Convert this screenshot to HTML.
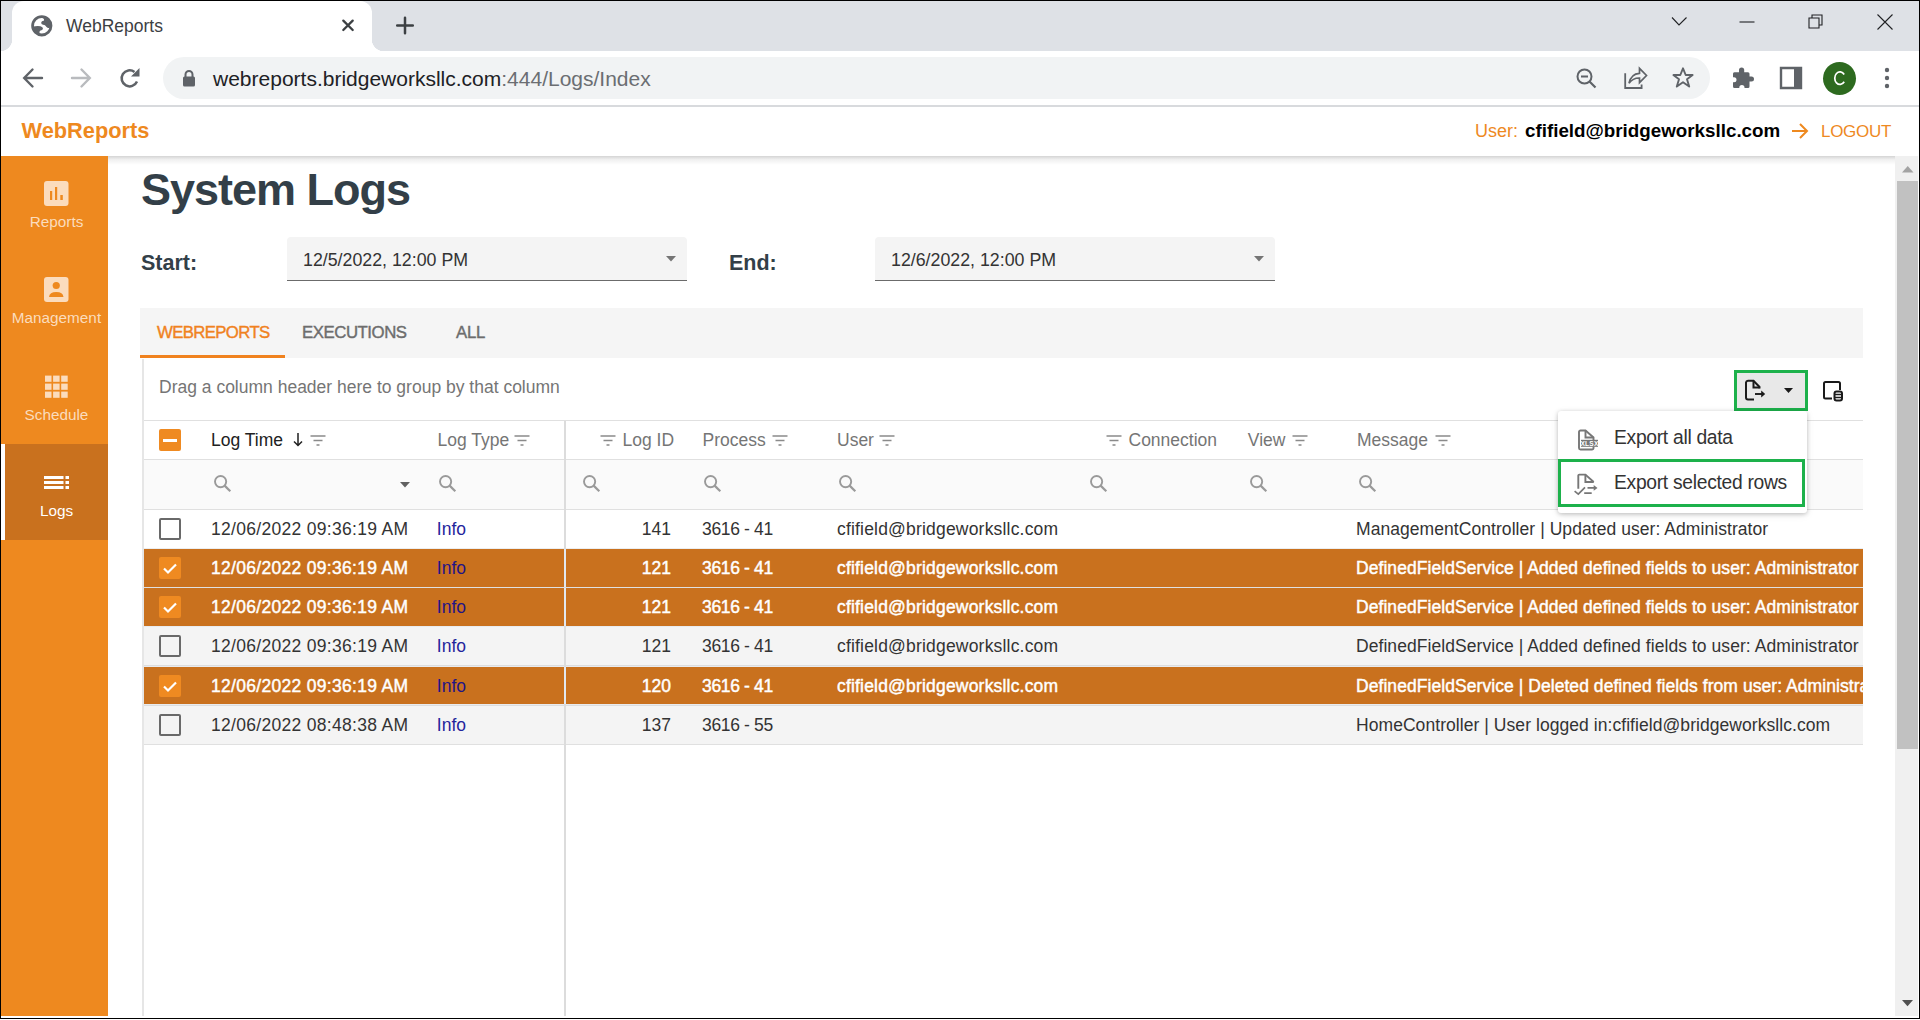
<!DOCTYPE html>
<html><head><meta charset="utf-8"><title>WebReports</title>
<style>
*{box-sizing:border-box;margin:0;padding:0}
html,body{width:1920px;height:1020px;overflow:hidden;background:#fff;font-family:"Liberation Sans",sans-serif;position:relative}
.abs{position:absolute}
svg{position:absolute;overflow:visible}
.t{position:absolute;white-space:nowrap;line-height:1}
#frame{position:absolute;left:0;top:0;width:1920px;height:1019px;border:1px solid #000;pointer-events:none;z-index:100}
#tabstrip{position:absolute;left:1px;top:1px;width:1918px;height:50px;background:#dee1e6}
#tab{position:absolute;left:12px;top:1px;width:360px;height:50px;background:#fff;border-radius:12px 12px 0 0}
#tab:before{content:"";position:absolute;left:-12px;bottom:0;width:12px;height:12px;background:radial-gradient(circle at 0 0,#dee1e6 12px,#fff 12.5px)}
#tab:after{content:"";position:absolute;right:-12px;bottom:0;width:12px;height:12px;background:radial-gradient(circle at 100% 0,#dee1e6 12px,#fff 12.5px)}
#omni{position:absolute;left:163px;top:57px;width:1547px;height:42px;background:#f1f3f4;border-radius:21px}
#sep{position:absolute;left:1px;top:105px;width:1918px;height:2px;background:#d8dadd}
#apphdr{position:absolute;left:1px;top:107px;width:1918px;height:49px;background:#fff}
#hdrshadow{position:absolute;left:108px;top:156px;width:1787px;height:9px;background:linear-gradient(rgba(0,0,0,.17),rgba(0,0,0,.06) 40%,rgba(0,0,0,0));z-index:6}
#sidebar{position:absolute;left:1px;top:156px;width:107px;height:860px;background:#ee891f}
#vscroll{position:absolute;left:1895px;top:156px;width:23px;height:860px;background:#f0f0f0}
</style></head><body>
<div id="frame"></div>
<div id="tabstrip"></div>
<div id="tab"></div>
<div id="omni"></div>
<div id="sep"></div>
<svg style="left:31px;top:15px" width="22" height="22" viewBox="0 0 22 22"><circle cx="10.8" cy="10.8" r="9.2" fill="none" stroke="#5f6368" stroke-width="2.8"/><path d="M10.5 2.2Q15.5 1.8 18.5 5.5Q20.5 8.5 19.8 11.5Q18.5 13.8 16.5 12.8Q15 12 14.5 10.8Q13.8 9.8 12 9.8Q10 9.5 10.2 7.5Q10.5 5.8 12.8 5.8Q13.5 4.5 12.5 3.5Z" fill="#5f6368"/><path d="M1.8 11.8Q5.5 10.5 9.5 11.2Q12 12 12 13.8Q11.5 15.5 9.5 15.5Q8.3 15.8 8.5 17.5L9 20.3Q3 19 1.8 11.8Z" fill="#5f6368"/></svg><div class="t" style="left:66px;top:17.69px;font-size:17.5px;color:#3c4043;font-weight:normal;">WebReports</div>
<svg style="left:341px;top:18px" width="14" height="14" viewBox="0 0 14 14"><path d="M2.3 2.6L11.7 12M11.7 2.6L2.3 12" stroke="#3c4043" stroke-width="2.3" stroke-linecap="round"/></svg>
<svg style="left:395px;top:16px" width="20" height="20" viewBox="0 0 20 20"><path d="M10 1.8V17.2M2.2 9.5H17.8" stroke="#3c4043" stroke-width="2.5" stroke-linecap="round"/></svg>
<svg style="left:1670px;top:15px" width="18" height="12" viewBox="0 0 18 12"><path d="M2 2.5L9 10L16.5 2.5" fill="none" stroke="#202124" stroke-width="1.1"/></svg>
<svg style="left:1738px;top:19.5px" width="18" height="4" viewBox="0 0 18 4"><path d="M1.5 2H16.5" stroke="#202124" stroke-width="1.1"/></svg>
<svg style="left:1807px;top:12px" width="18" height="18" viewBox="0 0 18 18"><path d="M2 6H12V16H2Z" fill="none" stroke="#202124" stroke-width="1.1"/><path d="M5 6V3H15V13H12" fill="none" stroke="#202124" stroke-width="1.1"/></svg>
<svg style="left:1875px;top:12px" width="20" height="20" viewBox="0 0 20 20"><path d="M2.5 2.5L17.5 17.5M17.5 2.5L2.5 17.5" stroke="#202124" stroke-width="1.1"/></svg>
<svg style="left:22px;top:67px" width="22" height="22" viewBox="0 0 22 22"><path d="M20 11H3M10.5 2.5L2.2 11L10.5 19.5" fill="none" stroke="#5f6368" stroke-width="2.4" stroke-linecap="round"/></svg>
<svg style="left:70px;top:67px" width="22" height="22" viewBox="0 0 22 22"><path d="M2 11H19M11.5 2.5L19.8 11L11.5 19.5" fill="none" stroke="#b9bbbe" stroke-width="2.4" stroke-linecap="round"/></svg>
<svg style="left:118px;top:66px" width="24" height="24" viewBox="0 0 24 24"><path d="M19 15.5A8 8 0 1 1 16.5 6" fill="none" stroke="#5f6368" stroke-width="2.5"/><path d="M21.5 2V10.5H13Z" fill="#5f6368"/></svg>
<svg style="left:181px;top:68px" width="16" height="20" viewBox="0 0 16 20"><path d="M4.5 9V6.5A3.5 3.5 0 0 1 11.5 6.5V9" fill="none" stroke="#5f6368" stroke-width="2"/><rect x="2" y="8.5" width="12" height="10" rx="1.5" fill="#5f6368"/></svg>
<div class="t" style="left:213px;top:68.22px;font-size:21px;color:#202124;font-weight:normal;">webreports.bridgeworksllc.com<span style="color:#6b6e72">:444/Logs/Index</span></div>
<svg style="left:1575px;top:66.5px" width="24" height="24" viewBox="0 0 24 24"><circle cx="9.5" cy="9.5" r="7" fill="none" stroke="#5f6368" stroke-width="2"/><path d="M6 9.5H13M14.5 14.5L20.5 20.5" stroke="#5f6368" stroke-width="2.2"/></svg>
<svg style="left:1623px;top:66px" width="24" height="24" viewBox="0 0 24 24"><path d="M2.2 7.3V22H18.6V18.6" fill="none" stroke="#5f6368" stroke-width="1.8"/><path d="M6 17.3Q8 7.8 16.5 7.3V2.3L23.5 9.5L16.5 16.7V12Q10 11.8 6 17.3Z" fill="none" stroke="#5f6368" stroke-width="1.7" stroke-linejoin="miter"/></svg><svg style="left:1671px;top:66px" width="24" height="24" viewBox="0 0 24 24"><path d="M12 2.3L14.7 9H21.6L16 13.3L18.2 20.6L12 16.2L5.8 20.6L8 13.3L2.4 9H9.3Z" fill="none" stroke="#5f6368" stroke-width="1.9" stroke-linejoin="round"/></svg>
<svg style="left:1731px;top:66px" width="24" height="24" viewBox="0 0 24 24"><path d="M2 8A1.5 1.5 0 0 1 3.5 6.3H8V4A2.6 2.6 0 0 1 13.2 4V6.3H17A1.5 1.5 0 0 1 18.5 7.8V10.5H20.5A2.5 2.5 0 0 1 20.5 15.5H18.5V20.5A1.5 1.5 0 0 1 17 22H13.5V21.5A2.6 2.6 0 0 0 8.3 21.5V22H3.5A1.5 1.5 0 0 1 2 20.5V16.3H3A2.5 2.5 0 0 0 3 11.3H2Z" fill="#5f6368"/></svg><svg style="left:1779px;top:66px" width="24" height="24" viewBox="0 0 24 24"><path d="M2 2H22V22H2Z" fill="none" stroke="#5f6368" stroke-width="2.4"/><rect x="15" y="2" width="7" height="20" fill="#5f6368"/></svg>
<div class="abs" style="left:1823px;top:62px;width:33px;height:33px;border-radius:50%;background:#2d6a1f"></div>
<svg style="left:1823px;top:62px" width="33" height="33" viewBox="0 0 33 33"><path d="M21.2 12.5A5.2 6.3 0 1 0 21.2 19.8" fill="none" stroke="#fff" stroke-width="1.7"/></svg><svg style="left:1877px;top:66px" width="20" height="24" viewBox="0 0 20 24"><circle cx="10" cy="4" r="2.2" fill="#5f6368"/><circle cx="10" cy="12" r="2.2" fill="#5f6368"/><circle cx="10" cy="20" r="2.2" fill="#5f6368"/></svg>
<div id="apphdr"></div>
<div class="t" style="left:21.5px;top:120.05px;font-size:21.8px;color:#ee891f;font-weight:bold;">WebReports</div>
<div class="t" style="left:1475px;top:122.26px;font-size:18px;color:#ee891f;font-weight:normal;">User:</div>
<div class="t" style="left:1525px;top:121.59px;font-size:18.8px;color:#000;font-weight:bold;">cfifield@bridgeworksllc.com</div>
<svg style="left:1790px;top:122px" width="20" height="18" viewBox="0 0 20 18"><path d="M2 9H17M10 2L17 9L10 16" fill="none" stroke="#ee891f" stroke-width="2"/></svg>
<div class="t" style="left:1821px;top:123.21px;font-size:17px;color:#ee891f;font-weight:normal;letter-spacing:-0.3px">LOGOUT</div>
<div id="sidebar"></div>
<div class="abs" style="left:1px;top:444px;width:107px;height:96px;background:#c9711e;border-left:4px solid #fff"></div>
<svg style="left:44px;top:181px" width="25" height="25" viewBox="0 0 25 25"><rect x="0" y="0" width="24.5" height="25" rx="3" fill="#fbdcbd"/><rect x="6" y="10" width="2.2" height="9" fill="#ee891f"/><rect x="11" y="6" width="2.2" height="13" fill="#ee891f"/><rect x="16.3" y="14" width="2.5" height="5" fill="#ee891f"/></svg>
<div class="t" style="left:-243.5px;width:600px;text-align:center;top:214.05px;font-size:15.3px;color:#fbdcbd;font-weight:normal;">Reports</div>
<svg style="left:44px;top:277px" width="25" height="25" viewBox="0 0 25 25"><rect x="0" y="0" width="24.5" height="25" rx="3" fill="#fbdcbd"/><circle cx="12.25" cy="8.5" r="3.6" fill="#ee891f"/><path d="M5 20Q5.5 15 12.25 15Q19 15 19.5 20Z" fill="#ee891f"/></svg>
<div class="t" style="left:-243.5px;width:600px;text-align:center;top:310.05px;font-size:15.3px;color:#fbdcbd;font-weight:normal;">Management</div>
<svg style="left:44px;top:375px" width="24" height="23" viewBox="0 0 24 23"><rect x="1.0" y="0.6" width="6.5" height="6.2" fill="#fbdcbd"/><rect x="9.1" y="0.6" width="6.5" height="6.2" fill="#fbdcbd"/><rect x="17.2" y="0.6" width="6.5" height="6.2" fill="#fbdcbd"/><rect x="1.0" y="8.6" width="6.5" height="6.2" fill="#fbdcbd"/><rect x="9.1" y="8.6" width="6.5" height="6.2" fill="#fbdcbd"/><rect x="17.2" y="8.6" width="6.5" height="6.2" fill="#fbdcbd"/><rect x="1.0" y="16.6" width="6.5" height="6.2" fill="#fbdcbd"/><rect x="9.1" y="16.6" width="6.5" height="6.2" fill="#fbdcbd"/><rect x="17.2" y="16.6" width="6.5" height="6.2" fill="#fbdcbd"/></svg>
<div class="t" style="left:-243.5px;width:600px;text-align:center;top:406.75px;font-size:15.3px;color:#fbdcbd;font-weight:normal;">Schedule</div>
<svg style="left:44px;top:475px" width="26" height="16" viewBox="0 0 26 16"><rect x="0" y="1" width="19.5" height="3" fill="#fff"/><rect x="0" y="6" width="19.5" height="3" fill="#fff"/><rect x="0" y="11" width="19.5" height="3" fill="#fff"/><rect x="21.5" y="1" width="3.5" height="3" fill="#fff"/><rect x="21.5" y="6" width="3.5" height="3" fill="#fff"/><rect x="21.5" y="11" width="3.5" height="3" fill="#fff"/></svg>
<div class="t" style="left:-243.5px;width:600px;text-align:center;top:503.05px;font-size:15.3px;color:#fff;font-weight:normal;">Logs</div>
<div id="hdrshadow"></div>
<div class="t" style="left:141px;top:167.41px;font-size:45px;color:#333f48;font-weight:bold;letter-spacing:-1px">System Logs</div>
<div class="t" style="left:141px;top:253.10px;font-size:21.5px;color:#333f48;font-weight:bold;">Start:</div>
<div class="t" style="left:729px;top:253.10px;font-size:21.5px;color:#333f48;font-weight:bold;">End:</div>
<div class="abs" style="left:287px;top:237px;width:400px;height:44px;background:#f4f4f4;border-radius:4px 4px 0 0;border-bottom:1px solid #6b6b6b"></div>
<div class="t" style="left:303px;top:251.93px;font-size:17.8px;color:#333;font-weight:normal;">12/5/2022, 12:00 PM</div>
<svg style="left:666px;top:256px" width="11" height="6" viewBox="0 0 11 6"><path d="M0 0H10L5 5.5Z" fill="#757575"/></svg>
<div class="abs" style="left:875px;top:237px;width:400px;height:44px;background:#f4f4f4;border-radius:4px 4px 0 0;border-bottom:1px solid #6b6b6b"></div>
<div class="t" style="left:891px;top:251.93px;font-size:17.8px;color:#333;font-weight:normal;">12/6/2022, 12:00 PM</div>
<svg style="left:1254px;top:256px" width="11" height="6" viewBox="0 0 11 6"><path d="M0 0H10L5 5.5Z" fill="#757575"/></svg>
<div class="abs" style="left:140px;top:308px;width:1723px;height:50px;background:#f5f5f5"></div>
<div class="abs" style="left:140px;top:355px;width:145px;height:3px;background:#f0821e"></div>
<div class="t" style="left:157px;top:325.28px;font-size:16.8px;color:#f0821e;font-weight:normal;letter-spacing:-0.65px;-webkit-text-stroke:0.4px #f0821e">WEBREPORTS</div>
<div class="t" style="left:302px;top:325.28px;font-size:16.8px;color:#6d6d6d;font-weight:normal;letter-spacing:-0.45px;-webkit-text-stroke:0.4px #6d6d6d">EXECUTIONS</div>
<div class="t" style="left:456px;top:325.28px;font-size:16.8px;color:#6d6d6d;font-weight:normal;letter-spacing:-0.3px;-webkit-text-stroke:0.4px #6d6d6d">ALL</div>
<div class="abs" style="left:142px;top:359px;width:1721px;height:657px;background:#fff;border-left:2px solid #e6e6e6"></div>
<div class="t" style="left:159px;top:378.69px;font-size:17.5px;color:#757575;font-weight:normal;">Drag a column header here to group by that column</div>
<div class="abs" style="left:1734px;top:370px;width:74px;height:41px;background:#e8e8e8;border:3px solid #1db14b"></div>
<svg style="left:1745px;top:380px" width="22" height="21" viewBox="0 0 22 21"><path d="M9 19.5H3A2 2 0 0 1 1 17.5V2.5A2 2 0 0 1 3 0.8H8.5L14.5 7V8.5" fill="none" stroke="#1a1a1a" stroke-width="2"/><path d="M8.5 0.8V7.5H14.5" fill="none" stroke="#1a1a1a" stroke-width="2"/><path d="M10 14H17" stroke="#1a1a1a" stroke-width="1.9"/><path d="M16.2 10.6L20.2 14L16.2 17.4Z" fill="#1a1a1a"/></svg>
<svg style="left:1784px;top:388px" width="10" height="6" viewBox="0 0 10 6"><path d="M0 0H9L4.5 5Z" fill="#1a1a1a"/></svg>
<svg style="left:1823px;top:381px" width="21" height="21" viewBox="0 0 21 21"><path d="M9 17.5H2.5A1.5 1.5 0 0 1 1 16V2.5A1.5 1.5 0 0 1 2.5 1H15.5A1.5 1.5 0 0 1 17 2.5V9" fill="none" stroke="#1a1a1a" stroke-width="2"/><rect x="11.5" y="10.5" width="7.5" height="9" rx="2" fill="none" stroke="#1a1a1a" stroke-width="2"/><path d="M12 13.5H18.5M12 16.5H18.5" stroke="#1a1a1a" stroke-width="1.6"/></svg>
<div class="abs" style="left:144px;top:420px;width:1719px;height:1px;background:#e0e0e0"></div>
<div class="abs" style="left:144px;top:459px;width:1719px;height:1px;background:#e0e0e0"></div>
<div class="abs" style="left:144px;top:460px;width:1719px;height:49px;background:#fafafa"></div>
<div class="abs" style="left:144px;top:509px;width:1719px;height:1px;background:#e0e0e0"></div>
<div class="abs" style="left:159px;top:429px;width:22px;height:22px;background:#ef8a21;border-radius:2px"></div>
<div class="abs" style="left:163px;top:438.5px;width:14px;height:3px;background:#fff"></div>
<div class="t" style="left:211px;top:431.99px;font-size:17.5px;color:#212121;font-weight:normal;">Log Time</div>
<svg style="left:292px;top:432px" width="12" height="15" viewBox="0 0 12 15"><path d="M6 1V13.5M2 9.5L6 13.5L10 9.5" fill="none" stroke="#212121" stroke-width="1.5"/></svg>
<svg style="left:310px;top:434.5px" width="16" height="11" viewBox="0 0 16 11"><path d="M0.5 1H15.5M3.5 5.5H12.5M6.5 10H9.5" stroke="#8a8a8a" stroke-width="1.6"/></svg>
<div class="t" style="left:437.5px;top:431.99px;font-size:17.5px;color:#757575;font-weight:normal;">Log Type</div>
<svg style="left:514px;top:434.5px" width="16" height="11" viewBox="0 0 16 11"><path d="M0.5 1H15.5M3.5 5.5H12.5M6.5 10H9.5" stroke="#8a8a8a" stroke-width="1.6"/></svg>
<svg style="left:600px;top:434.5px" width="16" height="11" viewBox="0 0 16 11"><path d="M0.5 1H15.5M3.5 5.5H12.5M6.5 10H9.5" stroke="#8a8a8a" stroke-width="1.6"/></svg>
<div class="t" style="left:622.5px;top:431.99px;font-size:17.5px;color:#757575;font-weight:normal;">Log ID</div>
<div class="t" style="left:702.5px;top:431.99px;font-size:17.5px;color:#757575;font-weight:normal;">Process</div>
<svg style="left:772px;top:434.5px" width="16" height="11" viewBox="0 0 16 11"><path d="M0.5 1H15.5M3.5 5.5H12.5M6.5 10H9.5" stroke="#8a8a8a" stroke-width="1.6"/></svg>
<div class="t" style="left:837px;top:431.99px;font-size:17.5px;color:#757575;font-weight:normal;">User</div>
<svg style="left:879px;top:434.5px" width="16" height="11" viewBox="0 0 16 11"><path d="M0.5 1H15.5M3.5 5.5H12.5M6.5 10H9.5" stroke="#8a8a8a" stroke-width="1.6"/></svg>
<svg style="left:1106px;top:434.5px" width="16" height="11" viewBox="0 0 16 11"><path d="M0.5 1H15.5M3.5 5.5H12.5M6.5 10H9.5" stroke="#8a8a8a" stroke-width="1.6"/></svg>
<div class="t" style="left:1128.5px;top:431.99px;font-size:17.5px;color:#757575;font-weight:normal;">Connection</div>
<div class="t" style="left:1247.8px;top:431.99px;font-size:17.5px;color:#757575;font-weight:normal;">View</div>
<svg style="left:1292px;top:434.5px" width="16" height="11" viewBox="0 0 16 11"><path d="M0.5 1H15.5M3.5 5.5H12.5M6.5 10H9.5" stroke="#8a8a8a" stroke-width="1.6"/></svg>
<div class="t" style="left:1357px;top:431.99px;font-size:17.5px;color:#757575;font-weight:normal;">Message</div>
<svg style="left:1434.6px;top:434.5px" width="16" height="11" viewBox="0 0 16 11"><path d="M0.5 1H15.5M3.5 5.5H12.5M6.5 10H9.5" stroke="#8a8a8a" stroke-width="1.6"/></svg>
<svg style="left:213.5px;top:475px" width="18" height="18" viewBox="0 0 18 18"><circle cx="6.6" cy="6.6" r="5.6" fill="none" stroke="#9a9a9a" stroke-width="1.9"/><path d="M10.6 10.6L16.3 16.3" stroke="#9a9a9a" stroke-width="2.2"/></svg>
<svg style="left:439px;top:475px" width="18" height="18" viewBox="0 0 18 18"><circle cx="6.6" cy="6.6" r="5.6" fill="none" stroke="#9a9a9a" stroke-width="1.9"/><path d="M10.6 10.6L16.3 16.3" stroke="#9a9a9a" stroke-width="2.2"/></svg>
<svg style="left:583px;top:475px" width="18" height="18" viewBox="0 0 18 18"><circle cx="6.6" cy="6.6" r="5.6" fill="none" stroke="#9a9a9a" stroke-width="1.9"/><path d="M10.6 10.6L16.3 16.3" stroke="#9a9a9a" stroke-width="2.2"/></svg>
<svg style="left:704px;top:475px" width="18" height="18" viewBox="0 0 18 18"><circle cx="6.6" cy="6.6" r="5.6" fill="none" stroke="#9a9a9a" stroke-width="1.9"/><path d="M10.6 10.6L16.3 16.3" stroke="#9a9a9a" stroke-width="2.2"/></svg>
<svg style="left:839px;top:475px" width="18" height="18" viewBox="0 0 18 18"><circle cx="6.6" cy="6.6" r="5.6" fill="none" stroke="#9a9a9a" stroke-width="1.9"/><path d="M10.6 10.6L16.3 16.3" stroke="#9a9a9a" stroke-width="2.2"/></svg>
<svg style="left:1090px;top:475px" width="18" height="18" viewBox="0 0 18 18"><circle cx="6.6" cy="6.6" r="5.6" fill="none" stroke="#9a9a9a" stroke-width="1.9"/><path d="M10.6 10.6L16.3 16.3" stroke="#9a9a9a" stroke-width="2.2"/></svg>
<svg style="left:1250px;top:475px" width="18" height="18" viewBox="0 0 18 18"><circle cx="6.6" cy="6.6" r="5.6" fill="none" stroke="#9a9a9a" stroke-width="1.9"/><path d="M10.6 10.6L16.3 16.3" stroke="#9a9a9a" stroke-width="2.2"/></svg>
<svg style="left:1359.4px;top:475px" width="18" height="18" viewBox="0 0 18 18"><circle cx="6.6" cy="6.6" r="5.6" fill="none" stroke="#9a9a9a" stroke-width="1.9"/><path d="M10.6 10.6L16.3 16.3" stroke="#9a9a9a" stroke-width="2.2"/></svg>
<svg style="left:400px;top:481.5px" width="10" height="6" viewBox="0 0 10 6"><path d="M0 0H10L5 5.5Z" fill="#616161"/></svg>
<div class="abs" style="left:144px;top:548px;width:1719px;height:1px;background:#eceef0"></div>
<div class="abs" style="left:144px;top:587px;width:1719px;height:1px;background:#e0e0e0"></div>
<div class="abs" style="left:144px;top:626px;width:1719px;height:1px;background:#e8ebef"></div>
<div class="abs" style="left:144px;top:665px;width:1719px;height:1px;background:#dddddd"></div>
<div class="abs" style="left:144px;top:666px;width:1719px;height:1px;background:#e8ebef"></div>
<div class="abs" style="left:144px;top:704px;width:1719px;height:1px;background:#e8ebef"></div>
<div class="abs" style="left:144px;top:705px;width:1719px;height:1px;background:#dddddd"></div>
<div class="abs" style="left:144px;top:744px;width:1719px;height:1px;background:#e0e0e0"></div>
<div class="abs" style="left:144px;top:510px;width:1719px;height:38px;background:#fff"></div>
<div class="abs" style="left:159px;top:518px;width:22px;height:22px;border:2px solid #696969;border-radius:2px"></div>
<div class="t" style="left:211px;top:521.39px;font-size:17.5px;color:#333;font-weight:normal;letter-spacing:0.3px">12/06/2022 09:36:19 AM</div>
<div class="t" style="left:436.8px;top:521.39px;font-size:17.5px;color:#24249c;font-weight:normal;">Info</div>
<div class="t" style="right:1249px;top:521.39px;font-size:17.5px;color:#333;font-weight:normal;">141</div>
<div class="t" style="left:702px;top:521.39px;font-size:17.5px;color:#333;font-weight:normal;letter-spacing:-0.35px">3616 - 41</div>
<div class="t" style="left:837px;top:521.39px;font-size:17.5px;color:#333;font-weight:normal;letter-spacing:0.19px">cfifield@bridgeworksllc.com</div>
<div class="abs" style="left:1356px;top:510px;width:507px;height:38px;overflow:hidden"><div class="t" style="left:0px;top:11.39px;font-size:17.5px;color:#333;font-weight:normal;letter-spacing:0.06px">ManagementController | Updated user: Administrator</div>
</div>
<div class="abs" style="left:144px;top:549px;width:1719px;height:38px;background:#c9711e"></div>
<div class="abs" style="left:159px;top:557px;width:22px;height:22px;background:#ef8a21;border-radius:2px"></div>
<svg style="left:159px;top:557px" width="22" height="22" viewBox="0 0 22 22"><path d="M5 11.5L9 15.5L17 7.5" fill="none" stroke="#fff" stroke-width="2.2"/></svg>
<div class="t" style="left:211px;top:560.39px;font-size:17.5px;color:#fff;font-weight:normal;letter-spacing:0.3px;-webkit-text-stroke:0.45px #fff">12/06/2022 09:36:19 AM</div>
<div class="t" style="left:436.8px;top:560.39px;font-size:17.5px;color:#1f1488;font-weight:normal;">Info</div>
<div class="t" style="right:1249px;top:560.39px;font-size:17.5px;color:#fff;font-weight:normal;;-webkit-text-stroke:0.45px #fff">121</div>
<div class="t" style="left:702px;top:560.39px;font-size:17.5px;color:#fff;font-weight:normal;letter-spacing:-0.35px;-webkit-text-stroke:0.45px #fff">3616 - 41</div>
<div class="t" style="left:837px;top:560.39px;font-size:17.5px;color:#fff;font-weight:normal;letter-spacing:0.19px;-webkit-text-stroke:0.45px #fff">cfifield@bridgeworksllc.com</div>
<div class="abs" style="left:1356px;top:549px;width:507px;height:38px;overflow:hidden"><div class="t" style="left:0px;top:11.39px;font-size:17.5px;color:#fff;font-weight:normal;letter-spacing:0.06px;-webkit-text-stroke:0.45px #fff">DefinedFieldService | Added defined fields to user: Administrator</div>
</div>
<div class="abs" style="left:144px;top:588px;width:1719px;height:38px;background:#c9711e"></div>
<div class="abs" style="left:159px;top:596px;width:22px;height:22px;background:#ef8a21;border-radius:2px"></div>
<svg style="left:159px;top:596px" width="22" height="22" viewBox="0 0 22 22"><path d="M5 11.5L9 15.5L17 7.5" fill="none" stroke="#fff" stroke-width="2.2"/></svg>
<div class="t" style="left:211px;top:599.39px;font-size:17.5px;color:#fff;font-weight:normal;letter-spacing:0.3px;-webkit-text-stroke:0.45px #fff">12/06/2022 09:36:19 AM</div>
<div class="t" style="left:436.8px;top:599.39px;font-size:17.5px;color:#1f1488;font-weight:normal;">Info</div>
<div class="t" style="right:1249px;top:599.39px;font-size:17.5px;color:#fff;font-weight:normal;;-webkit-text-stroke:0.45px #fff">121</div>
<div class="t" style="left:702px;top:599.39px;font-size:17.5px;color:#fff;font-weight:normal;letter-spacing:-0.35px;-webkit-text-stroke:0.45px #fff">3616 - 41</div>
<div class="t" style="left:837px;top:599.39px;font-size:17.5px;color:#fff;font-weight:normal;letter-spacing:0.19px;-webkit-text-stroke:0.45px #fff">cfifield@bridgeworksllc.com</div>
<div class="abs" style="left:1356px;top:588px;width:507px;height:38px;overflow:hidden"><div class="t" style="left:0px;top:11.39px;font-size:17.5px;color:#fff;font-weight:normal;letter-spacing:0.06px;-webkit-text-stroke:0.45px #fff">DefinedFieldService | Added defined fields to user: Administrator</div>
</div>
<div class="abs" style="left:144px;top:627px;width:1719px;height:38px;background:#f4f4f4"></div>
<div class="abs" style="left:159px;top:635px;width:22px;height:22px;border:2px solid #696969;border-radius:2px"></div>
<div class="t" style="left:211px;top:638.39px;font-size:17.5px;color:#333;font-weight:normal;letter-spacing:0.3px">12/06/2022 09:36:19 AM</div>
<div class="t" style="left:436.8px;top:638.39px;font-size:17.5px;color:#24249c;font-weight:normal;">Info</div>
<div class="t" style="right:1249px;top:638.39px;font-size:17.5px;color:#333;font-weight:normal;">121</div>
<div class="t" style="left:702px;top:638.39px;font-size:17.5px;color:#333;font-weight:normal;letter-spacing:-0.35px">3616 - 41</div>
<div class="t" style="left:837px;top:638.39px;font-size:17.5px;color:#333;font-weight:normal;letter-spacing:0.19px">cfifield@bridgeworksllc.com</div>
<div class="abs" style="left:1356px;top:627px;width:507px;height:38px;overflow:hidden"><div class="t" style="left:0px;top:11.39px;font-size:17.5px;color:#333;font-weight:normal;letter-spacing:0.06px">DefinedFieldService | Added defined fields to user: Administrator</div>
</div>
<div class="abs" style="left:144px;top:667px;width:1719px;height:37px;background:#c9711e"></div>
<div class="abs" style="left:159px;top:675px;width:22px;height:22px;background:#ef8a21;border-radius:2px"></div>
<svg style="left:159px;top:675px" width="22" height="22" viewBox="0 0 22 22"><path d="M5 11.5L9 15.5L17 7.5" fill="none" stroke="#fff" stroke-width="2.2"/></svg>
<div class="t" style="left:211px;top:678.39px;font-size:17.5px;color:#fff;font-weight:normal;letter-spacing:0.3px;-webkit-text-stroke:0.45px #fff">12/06/2022 09:36:19 AM</div>
<div class="t" style="left:436.8px;top:678.39px;font-size:17.5px;color:#1f1488;font-weight:normal;">Info</div>
<div class="t" style="right:1249px;top:678.39px;font-size:17.5px;color:#fff;font-weight:normal;;-webkit-text-stroke:0.45px #fff">120</div>
<div class="t" style="left:702px;top:678.39px;font-size:17.5px;color:#fff;font-weight:normal;letter-spacing:-0.35px;-webkit-text-stroke:0.45px #fff">3616 - 41</div>
<div class="t" style="left:837px;top:678.39px;font-size:17.5px;color:#fff;font-weight:normal;letter-spacing:0.19px;-webkit-text-stroke:0.45px #fff">cfifield@bridgeworksllc.com</div>
<div class="abs" style="left:1356px;top:667px;width:507px;height:37px;overflow:hidden"><div class="t" style="left:0px;top:11.39px;font-size:17.5px;color:#fff;font-weight:normal;letter-spacing:0.06px;-webkit-text-stroke:0.45px #fff">DefinedFieldService | Deleted defined fields from user: Administrator</div>
</div>
<div class="abs" style="left:144px;top:706px;width:1719px;height:38px;background:#f4f4f4"></div>
<div class="abs" style="left:159px;top:714px;width:22px;height:22px;border:2px solid #696969;border-radius:2px"></div>
<div class="t" style="left:211px;top:717.39px;font-size:17.5px;color:#333;font-weight:normal;letter-spacing:0.3px">12/06/2022 08:48:38 AM</div>
<div class="t" style="left:436.8px;top:717.39px;font-size:17.5px;color:#24249c;font-weight:normal;">Info</div>
<div class="t" style="right:1249px;top:717.39px;font-size:17.5px;color:#333;font-weight:normal;">137</div>
<div class="t" style="left:702px;top:717.39px;font-size:17.5px;color:#333;font-weight:normal;letter-spacing:-0.35px">3616 - 55</div>
<div class="abs" style="left:1356px;top:706px;width:507px;height:38px;overflow:hidden"><div class="t" style="left:0px;top:11.39px;font-size:17.5px;color:#333;font-weight:normal;letter-spacing:0.06px">HomeController | User logged in:cfifield@bridgeworksllc.com</div>
</div>
<div class="abs" style="left:564px;top:421px;width:2px;height:595px;background:#dcdcdc"></div>
<div class="abs" style="left:564px;top:549px;width:2px;height:38px;background:#e2e8ef"></div>
<div class="abs" style="left:564px;top:588px;width:2px;height:38px;background:#e2e8ef"></div>
<div class="abs" style="left:564px;top:667px;width:2px;height:37px;background:#e2e8ef"></div>
<div class="abs" style="left:1558px;top:411px;width:249px;height:102px;background:#fff;border-radius:3px;box-shadow:0 1px 4px rgba(0,0,0,.22),0 2px 8px rgba(0,0,0,.08);z-index:10"></div>
<div class="abs" style="left:1558px;top:459px;width:247px;height:48px;border:3px solid #1db14b;z-index:11"></div>
<div style="position:absolute;left:0;top:0;z-index:12"><svg style="left:1578px;top:430px" width="22" height="21" viewBox="0 0 22 21"><path d="M1 10V18A1.5 1.5 0 0 0 2.5 19.5H14A1.5 1.5 0 0 0 15.5 18V16.5" fill="none" stroke="#777" stroke-width="1.9"/><path d="M1 10V2A1.5 1.5 0 0 1 2.5 0.5H7.5L15.5 7.5V10" fill="none" stroke="#777" stroke-width="1.9"/><path d="M7.5 0.5V7.5H15.5" fill="none" stroke="#777" stroke-width="1.9"/><rect x="3" y="9.8" width="17" height="7" fill="#777"/><text x="11.5" y="15.8" font-size="6.6" font-weight="bold" text-anchor="middle" fill="#fff" font-family="Liberation Sans" letter-spacing="0.2">XLSX</text></svg><div class="t" style="left:1614px;top:427.86px;font-size:19.3px;color:#333;font-weight:normal;letter-spacing:-0.3px">Export all data</div>
<svg style="left:1574px;top:474px" width="24" height="22" viewBox="0 0 24 22"><path d="M4.3 14.8V1.6A1 1 0 0 1 5.3 0.6H11.4L19.7 8" fill="none" stroke="#777" stroke-width="1.9"/><path d="M11.4 0.6V8H19.7" fill="none" stroke="#777" stroke-width="1.9"/><path d="M0.6 17.2L4.3 20.2L11 13.3" fill="none" stroke="#777" stroke-width="1.7"/><path d="M13.5 13.9H20M10.2 19.1H17.7" stroke="#777" stroke-width="1.9"/><path d="M19.7 11L23.5 13.9L19.7 16.8Z" fill="#777"/></svg><div class="t" style="left:1614px;top:472.86px;font-size:19.3px;color:#333;font-weight:normal;letter-spacing:-0.3px">Export selected rows</div>
</div>
<div id="vscroll"></div>
<div class="abs" style="left:1897px;top:181px;width:21px;height:568px;background:#c1c1c1"></div>
<svg style="left:1902px;top:166px" width="12" height="7" viewBox="0 0 12 7"><path d="M0 6.5L5.75 0L11.5 6.5Z" fill="#a3a3a3"/></svg>
<svg style="left:1902px;top:1000px" width="11" height="7" viewBox="0 0 11 7"><path d="M0 0H11L5.5 6.2Z" fill="#505050"/></svg>
</body></html>
